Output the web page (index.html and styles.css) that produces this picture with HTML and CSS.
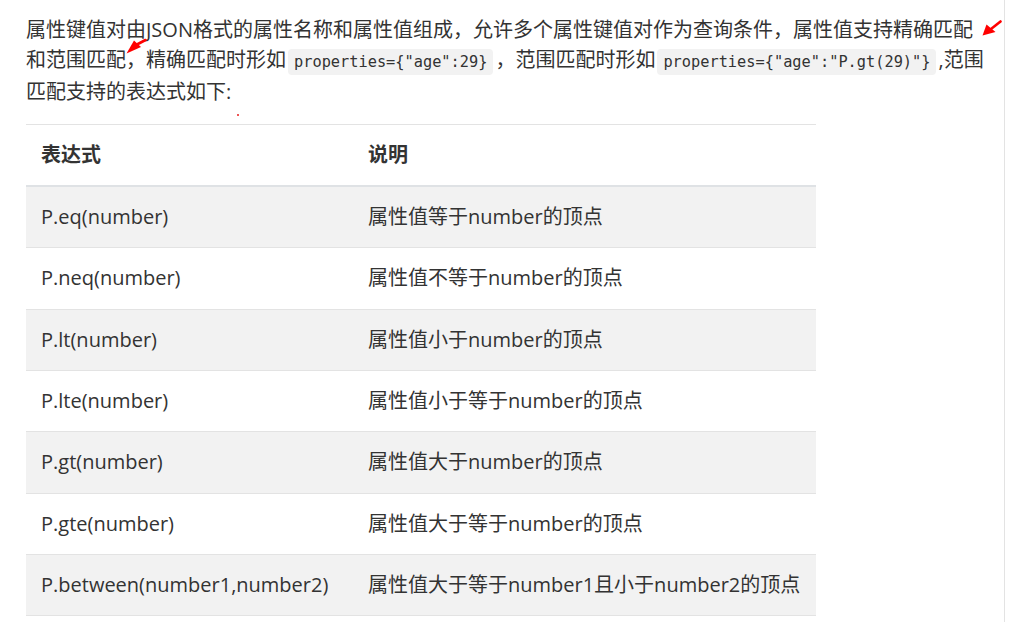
FILE: index.html
```html
<!DOCTYPE html>
<html lang="zh-CN">
<head>
<meta charset="utf-8">
<title>属性匹配</title>
<link rel="stylesheet" href="styles.css">
</head>
<body>
<div class="page">
  <div class="content">
    <p class="intro">属性键值对由JSON格式的属性名称和属性值组成，允许多个属性键值对作为查询条件，属性值支持精确匹配和范围匹配，精确匹配时形如<code>properties={"age":29}</code>，范围匹配时形如<code>properties={"age":"P.gt(29)"}</code>,范围匹配支持的表达式如下:</p>
    <table class="expr-table">
      <thead>
        <tr><th class="col-expr">表达式</th><th>说明</th></tr>
      </thead>
      <tbody>
        <tr><td>P.eq(number)</td><td>属性值等于number的顶点</td></tr>
        <tr><td>P.neq(number)</td><td>属性值不等于number的顶点</td></tr>
        <tr><td>P.lt(number)</td><td>属性值小于number的顶点</td></tr>
        <tr><td>P.lte(number)</td><td>属性值小于等于number的顶点</td></tr>
        <tr><td>P.gt(number)</td><td>属性值大于number的顶点</td></tr>
        <tr><td>P.gte(number)</td><td>属性值大于等于number的顶点</td></tr>
        <tr><td>P.between(number1,number2)</td><td>属性值大于等于number1且小于number2的顶点</td></tr>
      </tbody>
    </table>
    <svg class="mark mark-a" width="22" height="18" viewBox="0 0 22 18"><line x1="20.5" y1="2" x2="11" y2="7" stroke="#f00" stroke-width="2.6" stroke-linecap="round"/><polygon points="1.5,15.5 9,2.5 16,9" fill="#f00"/></svg>
    <svg class="mark mark-b" width="22" height="18" viewBox="0 0 22 18"><line x1="19.5" y1="1.5" x2="10" y2="9" stroke="#f00" stroke-width="2.6" stroke-linecap="round"/><polygon points="1.5,15.5 5.5,4.5 14.5,12" fill="#f00"/></svg>
    <span class="dot"></span>
  </div>
</div>
</body>
</html>
```

FILE: styles.css
```css
html, body {
  margin: 0;
  padding: 0;
  background: #fff;
}

.page {
  width: 1005px;
  height: 622px;
  border-right: 1px solid #e3e3e3;
  box-sizing: border-box;
  overflow: hidden;
}

.content {
  position: relative;
  padding: 15px 0 0 26px;
  font-family: "Open Sans", "Noto Sans CJK SC", sans-serif;
  color: #333;
  font-size: 20px;
}

.intro {
  margin: 0 0 17px 0;
  width: 964px;
  line-height: 30px;
}

.intro code {
  font-family: "DejaVu Sans Mono", monospace;
  font-size: 15.3px;
  background: #f2f2f2;
  border-radius: 4px;
  padding: 4px 6px;
  margin: 0 2px;
  color: #333;
}

.expr-table {
  width: 790px;
  border-collapse: collapse;
  border-top: 1px solid #e3e3e3;
}

.expr-table th,
.expr-table td {
  text-align: left;
  padding: 15px 15px;
  line-height: 30px;
  font-size: 20px;
  white-space: nowrap;
}

.expr-table th {
  font-weight: 700;
  border-bottom: 2px solid #dfe2e5;
}

.col-expr {
  width: 297px;
}

.expr-table td {
  border-bottom: 1px solid #e3e3e3;
  line-height: 30.33px;
}

.expr-table tbody tr:nth-child(odd) {
  background: #f2f2f2;
}

.mark {
  position: absolute;
}

.mark-a {
  left: 125px;
  top: 38px;
}

.mark-b {
  left: 981px;
  top: 20px;
}

.dot {
  position: absolute;
  left: 237px;
  top: 114px;
  width: 2px;
  height: 2px;
  background: #e55;
}
```
